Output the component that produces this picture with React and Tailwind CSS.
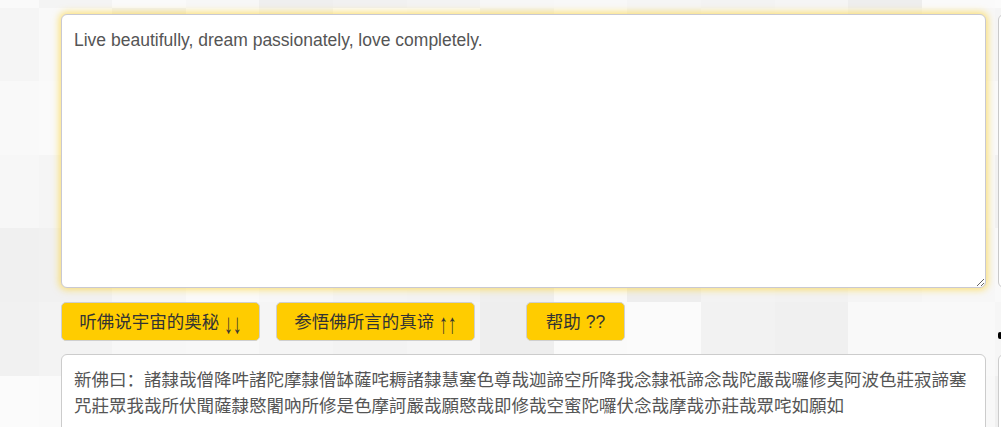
import React from "react";

const shades = [
  "#fafafa", "#f7f7f7", "#fbfbfb", "#f4f4f4", "#f8f8f8", "#f2f2f2", "#fafafa", "#f5f5f5",
  "#f0f0f0", "#f7f7f7", "#f3f3f3", "#f9f9f9", "#efefef", "#f5f5f5", "#f9f9f9", "#f1f1f1",
  "#eeeeee", "#f6f6f6", "#f3f3f3", "#fafafa",
];

function Background() {
  const cells = [];
  for (let r = 0; r < 7; r++) {
    for (let c = 0; c < 15; c++) {
      const i = (r * 7 + c * 3 + ((r * c) % 5)) % shades.length;
      cells.push(
        <div key={`${r}-${c}`} style={{ backgroundColor: shades[i] }} />
      );
    }
  }
  return (
    <div className="absolute left-[-35px] top-[-66px] grid grid-cols-[repeat(15,73.6px)] grid-rows-[repeat(7,73.6px)]">
      {cells}
    </div>
  );
}

const cjk = { fontFamily: '"Liberation Sans", "Noto Sans CJK SC", sans-serif' };

function Btn({ children, w }) {
  return (
    <button
      className={`${w} h-[39px] shrink-0 rounded-[5px] border border-[#cfcfcf] bg-[#ffcc00] text-[17.5px] leading-[26px] text-[#333] flex items-center justify-center`}
      style={cjk}
    >
      {children}
    </button>
  );
}

export default function App() {
  return (
    <div className="relative w-[1001px] h-[427px] overflow-hidden bg-[#f4f4f4]" style={cjk}>
      <Background />
      <div className="relative flex gap-[12px] pl-[61px] pt-[14px]">
        <div className="w-[925px] shrink-0 flex flex-col">
          <textarea
            readOnly
            defaultValue="Live beautifully, dream passionately, love completely."
            className="w-full h-[274px] rounded-[6px] border border-[#c9c9d2] bg-white p-3 text-[17.5px] leading-[26.25px] text-[#555] outline-none shadow-[0_0_7px_2px_rgba(255,210,40,0.6)]"
            style={cjk}
          />
          <div className="mt-[14px] flex">
            <Btn w="w-[199px]">
              听佛说宇宙的奥秘&nbsp;<span className="inline-block scale-y-[1.6] translate-y-[1px]">↓↓</span>
            </Btn>
            <div className="ml-[16px]">
              <Btn w="w-[199px]">
                参悟佛所言的真谛&nbsp;<span className="inline-block scale-y-[1.6] translate-y-[1px]">↑↑</span>
              </Btn>
            </div>
            <div className="ml-[51px]">
              <Btn w="w-[99px]">帮助 ??</Btn>
            </div>
          </div>
          <div className="mt-[13px] h-[120px] rounded-[6px] border border-[#cccccc] bg-white p-3 text-[17.5px] leading-[26.25px] text-[#555]">
            新佛曰：諸隸哉僧降吽諸陀摩隸僧缽薩咤耨諸隸慧塞色尊哉迦諦空所降我念隸祇諦念哉陀嚴哉囉修夷阿波色莊寂諦塞咒莊眾我哉所伏聞薩隸愍闍吶所修是色摩訶嚴哉願愍哉即修哉空蜜陀囉伏念哉摩哉亦莊哉眾咤如願如
          </div>
        </div>
        <div className="w-[925px] shrink-0 flex flex-col">
          <div className="h-[274px] rounded-[6px] border border-[#c9c9c9] bg-white" />
          <div className="h-[66px] relative">
            <div className="absolute left-0 top-[44px] w-[4px] h-[7px] rounded-full bg-black" />
          </div>
          <div className="h-[120px] rounded-[6px] border border-[#cccccc] bg-white" />
        </div>
      </div>
    </div>
  );
}
